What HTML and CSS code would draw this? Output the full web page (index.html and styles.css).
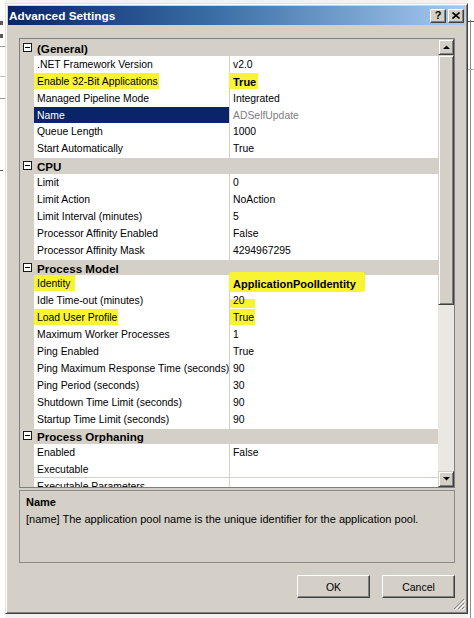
FILE: index.html
```html
<!DOCTYPE html>
<html>
<head>
<meta charset="utf-8">
<title>Advanced Settings</title>
<link rel="stylesheet" href="styles.css">
</head>
<body>
<div class="bg-left"></div>
<div class="win">
  <div class="title">
    <span class="title-text">Advanced Settings</span>
    <span class="tbtn help">?</span>
    <span class="tbtn close"><svg width="8" height="7" viewBox="0 0 8 7"><path d="M0.5 0.5L7.5 6.5M7.5 0.5L0.5 6.5" stroke="#000" stroke-width="1.6"/></svg></span>
  </div>
  <div class="content">
    <div class="pg">
      <div class="rows">
        <div class="row cat"><span class="gut"><svg width="9" height="9" viewBox="0 0 9 9"><rect x="0.5" y="0.5" width="8" height="8" fill="#fff" stroke="#1a1a1a"/><path d="M2 4.5h5" stroke="#000"/></svg></span><span class="nm">(General)</span></div>
        <div class="row prop"><span class="gut"></span><span class="nm">.NET Framework Version</span><span class="val">v2.0</span></div>
        <div class="row prop"><span class="gut"></span><span class="nm"><span class="hl hl-enable">Enable 32-Bit Applications</span></span><span class="val"><span class="hl hl-true b">True</span></span></div>
        <div class="row prop"><span class="gut"></span><span class="nm">Managed Pipeline Mode</span><span class="val">Integrated</span></div>
        <div class="row prop"><span class="gut"></span><span class="nm sel">Name</span><span class="val ro">ADSelfUpdate</span></div>
        <div class="row prop"><span class="gut"></span><span class="nm">Queue Length</span><span class="val">1000</span></div>
        <div class="row prop"><span class="gut"></span><span class="nm">Start Automatically</span><span class="val">True</span></div>
        <div class="row cat"><span class="gut"><svg width="9" height="9" viewBox="0 0 9 9"><rect x="0.5" y="0.5" width="8" height="8" fill="#fff" stroke="#1a1a1a"/><path d="M2 4.5h5" stroke="#000"/></svg></span><span class="nm">CPU</span></div>
        <div class="row prop"><span class="gut"></span><span class="nm">Limit</span><span class="val">0</span></div>
        <div class="row prop"><span class="gut"></span><span class="nm">Limit Action</span><span class="val">NoAction</span></div>
        <div class="row prop"><span class="gut"></span><span class="nm">Limit Interval (minutes)</span><span class="val">5</span></div>
        <div class="row prop"><span class="gut"></span><span class="nm">Processor Affinity Enabled</span><span class="val">False</span></div>
        <div class="row prop"><span class="gut"></span><span class="nm">Processor Affinity Mask</span><span class="val">4294967295</span></div>
        <div class="row cat"><span class="gut"><svg width="9" height="9" viewBox="0 0 9 9"><rect x="0.5" y="0.5" width="8" height="8" fill="#fff" stroke="#1a1a1a"/><path d="M2 4.5h5" stroke="#000"/></svg></span><span class="nm">Process Model</span></div>
        <div class="row prop"><span class="gut"></span><span class="nm"><span class="hl hl-identity">Identity</span></span><span class="val"><span class="hl hl-pool b">ApplicationPoolIdentity</span></span></div>
        <div class="row prop"><span class="gut"></span><span class="nm">Idle Time-out (minutes)</span><span class="val"><span class="hl hl-half">20</span></span></div>
        <div class="row prop"><span class="gut"></span><span class="nm"><span class="hl hl-load">Load User Profile</span></span><span class="val"><span class="hl hl-w">True</span></span></div>
        <div class="row prop"><span class="gut"></span><span class="nm">Maximum Worker Processes</span><span class="val">1</span></div>
        <div class="row prop"><span class="gut"></span><span class="nm">Ping Enabled</span><span class="val">True</span></div>
        <div class="row prop"><span class="gut"></span><span class="nm">Ping Maximum Response Time (seconds)</span><span class="val">90</span></div>
        <div class="row prop"><span class="gut"></span><span class="nm">Ping Period (seconds)</span><span class="val">30</span></div>
        <div class="row prop"><span class="gut"></span><span class="nm">Shutdown Time Limit (seconds)</span><span class="val">90</span></div>
        <div class="row prop"><span class="gut"></span><span class="nm">Startup Time Limit (seconds)</span><span class="val">90</span></div>
        <div class="row cat"><span class="gut"><svg width="9" height="9" viewBox="0 0 9 9"><rect x="0.5" y="0.5" width="8" height="8" fill="#fff" stroke="#1a1a1a"/><path d="M2 4.5h5" stroke="#000"/></svg></span><span class="nm">Process Orphaning</span></div>
        <div class="row prop"><span class="gut"></span><span class="nm">Enabled</span><span class="val">False</span></div>
        <div class="row prop"><span class="gut"></span><span class="nm">Executable</span><span class="val"></span></div>
        <div class="row prop"><span class="gut"></span><span class="nm">Executable Parameters</span><span class="val"></span></div>
      </div>
      <div class="sb">
        <div class="sbtn"><svg width="7" height="4" viewBox="0 0 7 4"><path d="M0 4H7L3.5 0.5Z" fill="#000"/></svg></div>
        <div class="thumb"></div>
        <div class="track"></div>
        <div class="sbtn"><svg width="7" height="4" viewBox="0 0 7 4"><path d="M0 0H7L3.5 3.5Z" fill="#000"/></svg></div>
      </div>
    </div>
    <div class="desc">
      <div class="desc-title">Name</div>
      <div class="desc-text">[name] The application pool name is the unique identifier for the application pool.</div>
    </div>
    <div class="btns">
      <span class="btn">OK</span>
      <span class="btn">Cancel</span>
    </div>
    <div class="grip"><svg width="12" height="12" viewBox="0 0 12 12"><path d="M11 1L1 11M11 5L5 11M11 9L9 11" stroke="#808080" stroke-width="1"/><path d="M12 2L2 12M12 6L6 12M12 10L10 12" stroke="#fff" stroke-width="1"/></svg></div>
  </div>
</div>
<div class="bg-right"></div>
</body>
</html>
```
FILE: styles.css
```css
html, body {
  margin: 0;
  padding: 0;
}
body {
  width: 474px;
  height: 618px;
  overflow: hidden;
  display: flex;
  align-items: flex-start;
  background: #f2f2f2;
  font-family: "Liberation Sans", Arial, sans-serif;
  color: #000;
}
.bg-left {
  flex: none;
  width: 5px;
  height: 618px;
  background:
    linear-gradient(#5a5a5a, #5a5a5a) 0 21px / 3px 4px no-repeat,
    linear-gradient(#5a5a5a, #5a5a5a) 0 34px / 3px 4px no-repeat,
    linear-gradient(#9a9a9a, #9a9a9a) 0 46px / 5px 1px no-repeat,
    linear-gradient(#bdbdbd, #bdbdbd) 0 76px / 5px 1px no-repeat,
    linear-gradient(#9a9a9a, #9a9a9a) 0 98px / 5px 1px no-repeat,
    linear-gradient(#555, #555) 0 170px / 3px 1px no-repeat,
    #fff;
}
.bg-right {
  flex: none;
  width: 6px;
  height: 618px;
  background:
    linear-gradient(#fff, #fff) 0 0 / 100% 20px no-repeat,
    linear-gradient(#555, #555) 0 21px / 100% 1px no-repeat,
    linear-gradient(#b0b0b0, #b0b0b0) 0 69px / 100% 1px no-repeat,
    linear-gradient(to right, transparent 2px, #8a8a8a 2px, #8a8a8a 3px, transparent 3px),
    #fff;
}
.win {
  flex: none;
  width: 463px;
  height: 611px;
  margin-top: 3px;
  box-sizing: border-box;
  border: 1px solid;
  border-color: #e4e2dc #404040 #404040 #e4e2dc;
  box-shadow: inset 1px 1px #fff, inset -1px -1px #808080;
  padding: 2px;
  background: #d4d0c8;
  display: flex;
  flex-direction: column;
}
.title {
  flex: none;
  height: 19px;
  display: flex;
  align-items: center;
  padding: 0 1px 0 1px;
  background: linear-gradient(to right, #0a246a, #3a6ea5 45%, #a6caf0);
  color: #fff;
  font-weight: bold;
  font-size: 11.8px;
}
.title-text {
  flex: 1;
  white-space: nowrap;
}
.tbtn {
  flex: none;
  width: 16px;
  height: 14px;
  box-sizing: border-box;
  border: 1px solid;
  border-color: #fff #404040 #404040 #fff;
  box-shadow: inset -1px -1px #808080;
  background: #d4d0c8;
  display: flex;
  align-items: center;
  justify-content: center;
  color: #000;
  font-size: 11px;
  font-weight: bold;
  line-height: 1;
}
.tbtn + .tbtn {
  margin-left: 2px;
}
.content {
  flex: 1;
  display: flex;
  flex-direction: column;
  padding: 13px 10px 0 11px;
  min-height: 0;
}
.pg {
  flex: none;
  height: 450px;
  box-sizing: border-box;
  border: 1px solid #7f7f7f;
  display: flex;
  background: #fff;
}
.rows {
  flex: 1;
  overflow: hidden;
}
.row {
  display: grid;
  grid-template-columns: 14px 196px 1fr;
  height: 16.9px;
  box-sizing: border-box;
  font-size: 10.4px;
  line-height: 18px;
}
.gut {
  background: #d4d0c8;
  display: flex;
  align-items: center;
}
.gut svg {
  margin-left: 3px;
}
.cat {
  background: #d4d0c8;
  font-weight: bold;
  font-size: 11.6px;
  line-height: 19px;
}
.cat .nm {
  grid-column: 2 / 4;
  padding-left: 3px;
  white-space: nowrap;
  overflow: hidden;
}
.prop .nm {
  box-sizing: border-box;
  background: #fff;
  border-right: 1px solid #d4d0c8;
  border-bottom: 1px solid #d4d0c8;
  padding-left: 3px;
  white-space: nowrap;
  overflow: hidden;
}
.prop .val {
  box-sizing: border-box;
  background: #fff;
  border-bottom: 1px solid #d4d0c8;
  padding-left: 3px;
  white-space: nowrap;
}
.nm.sel {
  background: #0a246a;
  color: #fff;
}
.val.ro {
  color: #808080;
}
.b {
  font-weight: bold;
  font-size: 11px;
}
.hl {
  display: inline-block;
  vertical-align: top;
  height: 15.9px;
  margin-left: -3px;
  padding: 0 2px 0 3px;
  background: #f9f432;
}
.hl-enable {
  padding-right: 1px;
}
.hl-identity {
  padding-right: 4px;
}
.hl-load {
  padding-right: 1px;
}
.hl-true {
  margin-left: -4px;
  padding-left: 4px;
  padding-right: 2px;
}
.hl-pool {
  margin-left: -4px;
  padding-left: 4px;
  padding-right: 9px;
  border-radius: 3px;
  box-shadow: 0 -3px 0 #f9f432, 0 1px 0 #f9f432;
}
.hl-half {
  box-sizing: border-box;
  width: 25px;
  background: linear-gradient(to bottom, transparent 45%, #f9f432 45%);
}
.hl-w {
  box-sizing: border-box;
  width: 25px;
}
.sb {
  flex: none;
  width: 16px;
  display: flex;
  flex-direction: column;
}
.sbtn, .thumb {
  flex: none;
  box-sizing: border-box;
  border: 1px solid;
  border-color: #d4d0c8 #404040 #404040 #d4d0c8;
  box-shadow: inset 1px 1px #fff, inset -1px -1px #808080;
  background: #d4d0c8;
}
.sbtn {
  height: 16px;
  display: flex;
  align-items: center;
  justify-content: center;
}
.thumb {
  height: 250px;
}
.track {
  flex: 1;
  background: #eae8e3;
}
.desc {
  flex: none;
  margin-top: 2px;
  height: 73px;
  box-sizing: border-box;
  border: 1px solid #8c8a85;
  padding: 4px 6px 0;
  font-size: 11px;
  line-height: 15px;
}
.desc-title {
  font-weight: bold;
}
.desc-text {
  margin-top: 2px;
  white-space: nowrap;
}
.btns {
  flex: none;
  margin-top: 12px;
  display: flex;
  justify-content: flex-end;
  gap: 12px;
}
.btn {
  width: 73px;
  height: 23px;
  box-sizing: border-box;
  border: 1px solid;
  border-color: #fff #404040 #404040 #fff;
  box-shadow: inset -1px -1px #808080;
  background: #d4d0c8;
  display: flex;
  align-items: center;
  justify-content: center;
  font-size: 10.5px;
}
.grip {
  flex: none;
  align-self: flex-end;
  margin-right: -10px;
  width: 12px;
  height: 12px;
}
.grip svg {
  display: block;
}
```
